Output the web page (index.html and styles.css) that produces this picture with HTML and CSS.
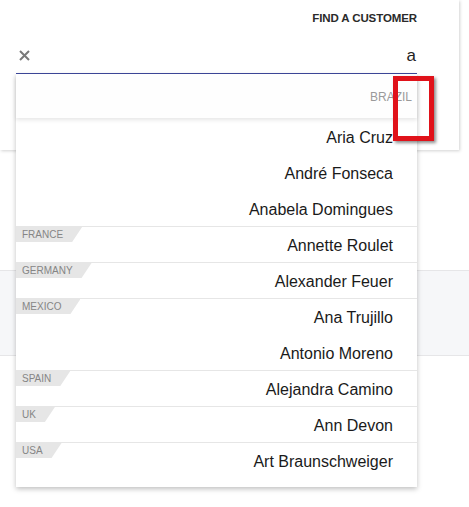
FILE: index.html
```html
<!DOCTYPE html>
<html>
<head>
<meta charset="utf-8">
<link rel="stylesheet" href="styles.css">
</head>
<body>
<div class="page">
  <div class="card">
    <div class="title">FIND A CUSTOMER</div>
    <div class="search">
      <div class="field">
        <svg class="clear" width="11" height="11" viewBox="0 0 11 11"><path d="M1 1L10 10M10 1L1 10" stroke="#7a7a7a" stroke-width="2" fill="none"/></svg>
        <span class="value">a</span>
      </div>
      <div class="dropdown">
        <div class="sticky">BRAZIL</div>
        <div class="list">
          <div class="group">
            <div class="row">Aria Cruz</div>
            <div class="row">André Fonseca</div>
            <div class="row">Anabela Domingues</div>
          </div>
          <div class="group">
            <span class="tag">FRANCE</span>
            <div class="row">Annette Roulet</div>
          </div>
          <div class="group">
            <span class="tag">GERMANY</span>
            <div class="row">Alexander Feuer</div>
          </div>
          <div class="group">
            <span class="tag">MEXICO</span>
            <div class="row">Ana Trujillo</div>
            <div class="row">Antonio Moreno</div>
          </div>
          <div class="group">
            <span class="tag">SPAIN</span>
            <div class="row">Alejandra Camino</div>
          </div>
          <div class="group">
            <span class="tag">UK</span>
            <div class="row">Ann Devon</div>
          </div>
          <div class="group">
            <span class="tag">USA</span>
            <div class="row">Art Braunschweiger</div>
          </div>
        </div>
      </div>
    </div>
  </div>
  <div class="band"></div>
  <div class="marker"></div>
</div>
</body>
</html>
```

FILE: styles.css
```css
* { box-sizing: border-box; }
html, body { margin: 0; padding: 0; background: #fff; }
body { font-family: "Liberation Sans", Arial, sans-serif; color: #222; }
.page { position: relative; width: 469px; height: 507px; overflow: hidden; }
.card {
  width: 459px;
  height: 150px;
  background: #fff;
  box-shadow: 1px 1px 3px rgba(0,0,0,0.18);
  padding: 11px 42px 0 16px;
  position: relative;
  z-index: 1;
}
.title {
  text-align: right;
  font-size: 11.5px;
  font-weight: bold;
  line-height: 14px;
  color: #2a2a2a;
  letter-spacing: -0.1px;
}
.search { position: relative; margin-top: 15px; }
.field {
  display: flex;
  align-items: center;
  justify-content: space-between;
  height: 34px;
  border-bottom: 1px solid #3f4a9f;
  padding: 0 1px 2px 3px;
}
.clear { display: block; }
.value { font-size: 17px; color: #222; }
.dropdown {
  position: absolute;
  top: 100%;
  left: 0;
  right: 0;
  background: #fff;
  box-shadow: 0 2px 5px rgba(0,0,0,0.25);
  padding-bottom: 9px;
}
.sticky {
  height: 44px;
  display: flex;
  align-items: center;
  justify-content: flex-end;
  padding-right: 5px;
  padding-top: 1px;
  font-size: 12px;
  color: #9a9a9a;
  background: #fefefe;
  box-shadow: 0 2px 4px rgba(0,0,0,0.1);
  position: relative;
  z-index: 1;
}
.group { position: relative; border-top: 1px solid #e6e6e6; }
.group:first-child { border-top: none; }
.row {
  height: 36px;
  display: flex;
  align-items: center;
  justify-content: flex-end;
  padding: 3px 24px 0 0;
  font-size: 16px;
  color: #1a1a1a;
}
.group + .group .row:first-of-type { height: 35px; padding-top: 2px; }
.tag {
  position: absolute;
  top: 0;
  left: 0;
  height: 15px;
  line-height: 14px;
  padding: 1px 19px 0 6px;
  font-size: 10px;
  color: #858585;
  background: #e6e6e6;
  clip-path: polygon(0 0, 100% 0, calc(100% - 10px) 100%, 0 100%);
}
.band {
  margin-top: 120px;
  height: 86px;
  background: #f6f7f9;
  border-top: 1px solid #e6e6e8;
  border-bottom: 1px solid #e6e6e8;
}
.marker {
  position: absolute;
  left: 393px;
  top: 76px;
  width: 41px;
  height: 65px;
  border: 5px solid #e0121a;
  box-shadow: 2px 2px 3px rgba(0,0,0,0.45);
  z-index: 5;
}
```
